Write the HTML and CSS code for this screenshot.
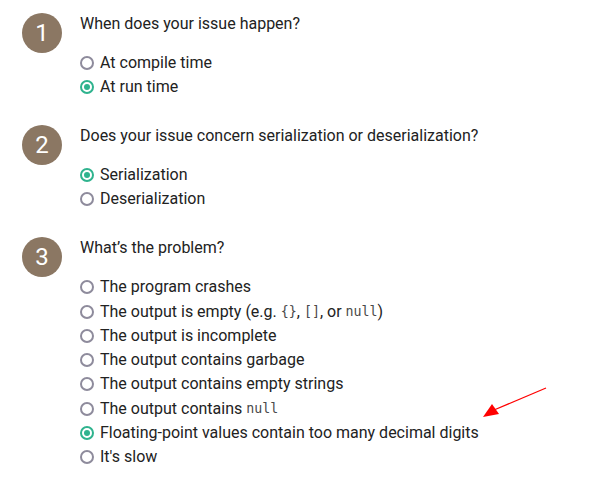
FILE: index.html
```html
<!DOCTYPE html>
<html lang="en">
  <head>
    <meta charset="utf-8">
    <title>Troubleshooter</title>
    <link rel="stylesheet" href="styles.css">
  </head>
  <body>
    <ol class="steps">
      <li class="step">
        <span class="step-num">1</span>
        <div class="step-body">
          <p class="question">When does your issue happen?</p>
          <ul class="options">
            <li><span class="radio"></span>At compile time</li>
            <li><span class="radio checked"></span>At run time</li>
          </ul>
        </div>
      </li>
      <li class="step">
        <span class="step-num">2</span>
        <div class="step-body">
          <p class="question">Does your issue concern serialization or deserialization?</p>
          <ul class="options">
            <li><span class="radio checked"></span>Serialization</li>
            <li><span class="radio"></span>Deserialization</li>
          </ul>
        </div>
      </li>
      <li class="step">
        <span class="step-num">3</span>
        <div class="step-body">
          <p class="question">What’s the problem?</p>
          <ul class="options">
            <li><span class="radio"></span>The program crashes</li>
            <li class="with-code"><span class="radio"></span>The output is empty (e.g.&nbsp;<code>{}</code>, <code>[]</code>, or <code>null</code>)</li>
            <li><span class="radio"></span>The output is incomplete</li>
            <li><span class="radio"></span>The output contains garbage</li>
            <li><span class="radio"></span>The output contains empty strings</li>
            <li class="with-code"><span class="radio"></span>The output contains&nbsp;<code>null</code></li>
            <li><span class="radio checked"></span>Floating-point values contain too many decimal digits</li>
            <li><span class="radio"></span>It's slow</li>
          </ul>
        </div>
      </li>
    </ol>
    <svg class="arrow" width="70" height="40" viewBox="0 0 70 40">
      <line x1="66" y1="8" x2="14" y2="30" stroke="#ff0000" stroke-width="1.2"/>
      <polygon points="3,37 12,24 19,34" fill="#ff0000"/>
    </svg>
  </body>
</html>
```

FILE: styles.css
```css
html {
  background: #ffffff;
}

body {
  margin: 0;
  font-family: Roboto, "Liberation Sans", sans-serif;
  font-size: 16px;
  line-height: 24px;
  color: #222222;
  position: relative;
}

.steps {
  list-style: none;
  margin: 0;
  padding: 12px 0 0 22px;
}

.step {
  display: flex;
  gap: 18px;
  margin-bottom: 25px;
}

.step-num {
  flex: none;
  width: 40px;
  height: 40px;
  margin-top: 1px;
  border-radius: 50%;
  background: #8b7763;
  color: #ffffff;
  font-size: 24px;
  line-height: 40px;
  text-align: center;
}

.question {
  margin: 0;
}

.options {
  list-style: none;
  margin: 15px 0 0 0;
  padding: 0;
}

.options li {
  display: flex;
  align-items: center;
  height: 24px;
  white-space: pre;
}

.options li.with-code {
  height: 25px;
}

.radio {
  flex: none;
  box-sizing: border-box;
  width: 14px;
  height: 14px;
  margin-right: 6px;
  border: 2px solid #8e8b9c;
  border-radius: 50%;
  position: relative;
}

.radio.checked {
  border-color: #2fb38e;
}

.radio.checked::after {
  content: "";
  position: absolute;
  left: 2px;
  top: 2px;
  width: 6px;
  height: 6px;
  border-radius: 50%;
  background: #2fb38e;
}

code {
  font-family: "DejaVu Sans Mono", "Liberation Mono", monospace;
  font-size: 13.3px;
  color: #4a4a4a;
}

.arrow {
  position: absolute;
  left: 480px;
  top: 380px;
}
```
